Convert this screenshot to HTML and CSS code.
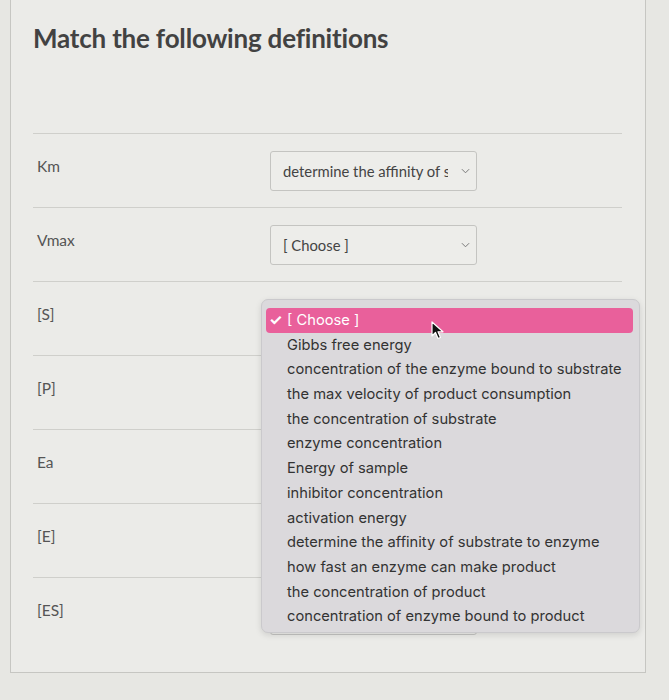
FILE: index.html
```html
<!DOCTYPE html>
<html>
<head>
<meta charset="utf-8">
<link rel="stylesheet" href="styles.css">
</head>
<body>
<div class="card">
  <h1 class="title">Match the following definitions</h1>
  <div class="rows">
    <div class="row">
      <div class="label">Km</div>
      <div class="select"><span class="sel-text">determine the affinity of substrate to enzyme</span><svg class="chev" viewBox="0 0 10 6" width="9" height="6"><path d="M1 1 L5 5 L9 1" fill="none" stroke="#777" stroke-width="1.1"/></svg></div>
    </div>
    <div class="row">
      <div class="label">Vmax</div>
      <div class="select"><span class="sel-text">[ Choose ]</span><svg class="chev" viewBox="0 0 10 6" width="9" height="6"><path d="M1 1 L5 5 L9 1" fill="none" stroke="#777" stroke-width="1.1"/></svg></div>
    </div>
    <div class="row">
      <div class="label">[S]</div>
      <div class="select"><span class="sel-text">[ Choose ]</span></div>
    </div>
    <div class="row">
      <div class="label">[P]</div>
      <div class="select"><span class="sel-text">[ Choose ]</span></div>
    </div>
    <div class="row">
      <div class="label">Ea</div>
      <div class="select"><span class="sel-text">[ Choose ]</span></div>
    </div>
    <div class="row">
      <div class="label">[E]</div>
      <div class="select"><span class="sel-text">[ Choose ]</span></div>
    </div>
    <div class="row">
      <div class="label">[ES]</div>
      <div class="select"><span class="sel-text">[ Choose ]</span></div>
    </div>
  </div>
</div>

<div class="popup">
  <div class="opt selected"><span class="check">✓</span>[ Choose ]</div>
  <div class="opt">Gibbs free energy</div>
  <div class="opt">concentration of the enzyme bound to substrate</div>
  <div class="opt">the max velocity of product consumption</div>
  <div class="opt">the concentration of substrate</div>
  <div class="opt">enzyme concentration</div>
  <div class="opt">Energy of sample</div>
  <div class="opt">inhibitor concentration</div>
  <div class="opt">activation energy</div>
  <div class="opt">determine the affinity of substrate to enzyme</div>
  <div class="opt">how fast an enzyme can make product</div>
  <div class="opt">the concentration of product</div>
  <div class="opt">concentration of enzyme bound to product</div>
</div>

<svg class="cursor" width="14" height="20" viewBox="0 0 14 20">
  <path d="M1 1 L1 15 L4.5 11.5 L7 17.5 L9.5 16.5 L7 10.8 L12 10.8 Z" fill="#111" stroke="#fff" stroke-width="1.2" stroke-linejoin="round"/>
</svg>
</body>
</html>
```

FILE: styles.css
```css
html, body {
  margin: 0;
  padding: 0;
}
body {
  background: #e7e7e3;
  width: 669px;
  height: 700px;
  overflow: hidden;
  position: relative;
  font-family: Lato, "Open Sans", sans-serif;
}
.card {
  margin-left: 10px;
  width: 636px;
  height: 673px;
  background: #ebebe8;
  border: 1px solid #c6c6c2;
  border-top: none;
  box-sizing: border-box;
}
.title {
  margin: 0;
  padding: 22px 0 0 22px;
  height: 133px;
  box-sizing: border-box;
  font-size: 26px;
  font-weight: 700;
  color: #424242;
  letter-spacing: -0.2px;
}
.rows {
  margin-left: 22px;
  width: 589px;
}
.row {
  display: flex;
  height: 74px;
  box-sizing: border-box;
  border-top: 1px solid #cfcfcb;
}
.label {
  width: 233px;
  padding-left: 4px;
  padding-top: 21px;
  font-size: 15.5px;
  line-height: 22px;
  color: #555;
}
.select {
  margin-top: 17px;
  width: 207px;
  height: 40px;
  box-sizing: border-box;
  border: 1px solid #c4c4c1;
  border-radius: 3px;
  background: #ededea;
  display: flex;
  align-items: center;
  padding: 0 6px 0 12px;
  font-size: 14.8px;
  color: #444;
}
.sel-text {
  flex: 1;
  overflow: hidden;
  white-space: nowrap;
  margin-right: 13px;
}
.chev {
  flex: none;
}
.popup {
  position: absolute;
  left: 261px;
  top: 299px;
  width: 379px;
  height: 334px;
  box-sizing: border-box;
  background: #dbd9dc;
  border: 1px solid #cac9cc;
  border-radius: 7px;
  box-shadow: 0 2px 6px rgba(0,0,0,0.12);
  padding: 8px 6px 0 4px;
  font-family: Inter, "Noto Sans", sans-serif;
  font-size: 14.7px;
  color: #333;
}
.opt {
  height: 24.7px;
  line-height: 24.7px;
  padding-left: 21px;
  white-space: nowrap;
  position: relative;
}
.opt.selected {
  background: #e9609b;
  color: #fff;
  border-radius: 4px;
}
.check {
  position: absolute;
  left: 3px;
  top: 0;
  font-size: 15px;
  font-weight: 700;
}
.cursor {
  position: absolute;
  left: 431px;
  top: 321px;
}
```
